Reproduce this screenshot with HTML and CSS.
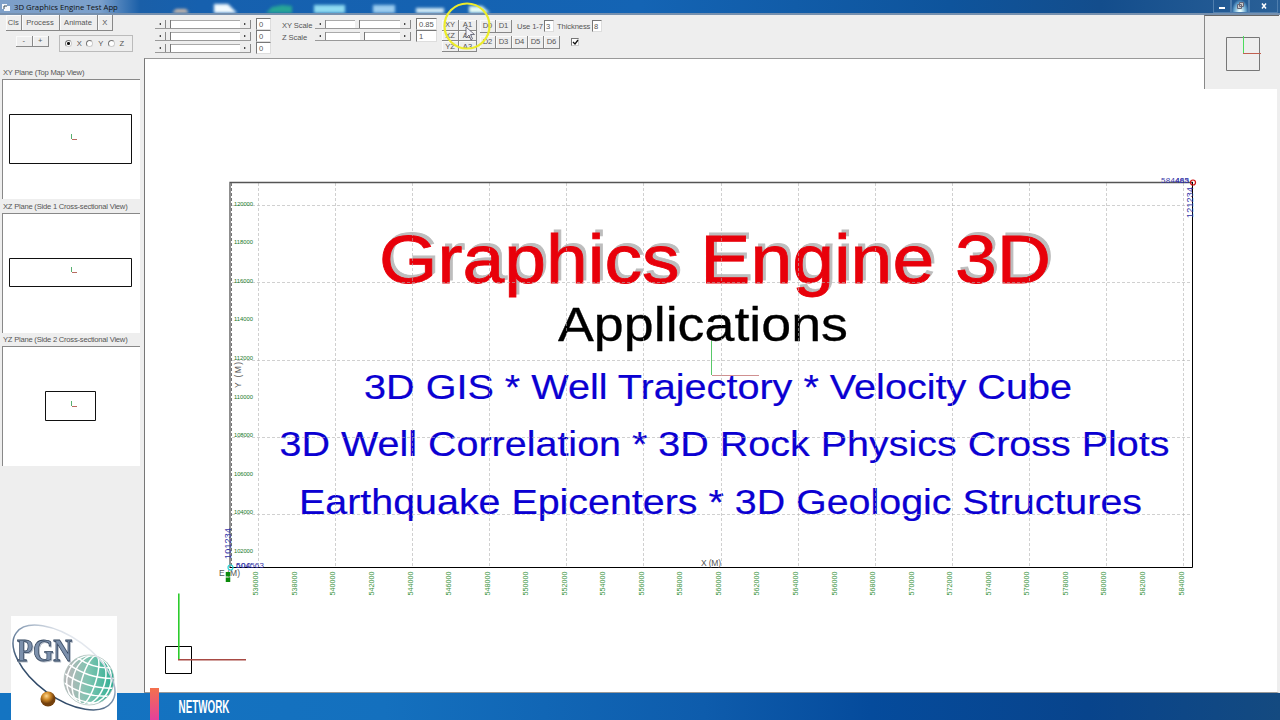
FILE: index.html
```html
<!DOCTYPE html>
<html lang="en">
<head>
    <meta charset="UTF-8">
    <title>3D Graphics Engine Test App</title>
    <link rel="stylesheet" href="styles.css">
</head>
<body>
    <header class="titlebar">
        <svg class="app-icon" width="10" height="10" viewBox="0 0 10 10">
            <path d="M1 2h5v2h3v5H3V7H1z" fill="#f4f8fc"/>
            <path d="M3 7V4h3" fill="none" stroke="#345" stroke-width="1"/>
        </svg>
        <span class="title">3D Graphics Engine Test App</span>
        <svg class="desktop" width="400" height="13" viewBox="120 0 400 13">
            <g class="blobs">
                <path d="M172 13l4-4h10l3 4z" fill="#cbb9ac"/>
                <path d="M214 4h14l9 9h-23z" fill="#f2fbff"/>
                <path d="M266 13l6-6 10-2 10 1v7z" fill="#27a596"/>
                <path d="M314 5h31v8h-31z" fill="#8fdcf2"/>
                <path d="M373 5h22v8h-22z" fill="#9ccdf0"/>
                <path d="M416 8h28v5h-28z" fill="#d4ecf6"/>
                <path d="M469 6h13l8 7h-21z" fill="#e4fbf4"/>
            </g>
        </svg>
        <div class="window-buttons">
            <span class="win"><svg width="8" height="9"><path d="M1 7h6" stroke="#fff" stroke-width="2"/></svg></span>
            <span class="win glow"><svg width="9" height="9"><path d="M3.500 1.500h4v4h-4zM1.500 3.500h4v4h-4z" fill="#ccc" stroke="#667"/></svg></span>
            <span class="win close"><svg width="8" height="9"><path d="M2 2.500l4 5M6 2.500l-4 5" stroke="#fff" stroke-width="1.500"/></svg></span>
        </div>
    </header>

    <div class="workspace">
        <aside class="sidebar">
            <div class="buttons">
                <button class="btn w16">Cls</button><button class="btn w38">Process</button><button class="btn w38">Animate</button><button class="btn w16">X</button>
            </div>
            <div class="axis-row">
                <div class="zoomers"><button class="btn">-</button><button class="btn">+</button></div>
                <div class="axis-group">
                    <span class="radio on"></span>X
                    <span class="radio"></span>Y
                    <span class="radio"></span>Z
                </div>
            </div>
            <section class="plane">
                <h2><span>XY Plane (Top Map View)</span></h2>
                <svg class="view" width="138" height="120" viewBox="3 80 137 119">
                    <path class="box" d="M9.500 114.500h122v49h-122z"/>
                    <path class="g" d="M71.500 134v5"/><path class="r" d="M72 139.500h5"/>
                </svg>
            </section>
            <section class="plane">
                <h2><span>XZ Plane (Side 1 Cross-sectional View)</span></h2>
                <svg class="view" width="138" height="120" viewBox="3 214 137 119">
                    <path class="box" d="M9.500 258.500h122v28h-122z"/>
                    <path class="g" d="M71.500 267v5"/><path class="r" d="M72 272.500h5"/>
                </svg>
            </section>
            <section class="plane">
                <h2><span>YZ Plane (Side 2 Cross-sectional View)</span></h2>
                <svg class="view" width="138" height="120" viewBox="3 347 137 119">
                    <path class="box" d="M45.500 391.500h50v29h-50z"/>
                    <path class="g" d="M71.500 401v5"/><path class="r" d="M72 406.500h5"/>
                </svg>
            </section>
        </aside>

        <main class="main">
            <div class="toolbar">
                <div class="rotate">
                    <div class="line"><div class="scroll"><i class="arrow left"></i><i class="thumb"></i><i class="track"></i><i class="arrow right"></i></div><span class="field">0</span></div>
                    <div class="line"><div class="scroll"><i class="arrow left"></i><i class="thumb"></i><i class="track"></i><i class="arrow right"></i></div><span class="field">0</span></div>
                    <div class="line"><div class="scroll"><i class="arrow left"></i><i class="thumb"></i><i class="track"></i><i class="arrow right"></i></div><span class="field">0</span></div>
                </div>
                <div class="scales">
                    <div class="line"><label>XY Scale</label><div class="scroll"><i class="arrow left"></i><i class="track before-xy"></i><i class="thumb"></i><i class="track"></i><i class="arrow right"></i></div><span class="field wide">0.85</span></div>
                    <div class="line"><label>Z Scale</label><div class="scroll"><i class="arrow left"></i><i class="track before-z"></i><i class="thumb"></i><i class="track"></i><i class="arrow right"></i></div><span class="field wide">1</span></div>
                </div>
                <div class="pairs">
                    <button class="btn">XY</button><button class="btn">A1</button>
                    <button class="btn">XZ</button><button class="btn">A2</button>
                    <button class="btn">YZ</button><button class="btn">A3</button>
                </div>
                <div class="draw">
                    <div class="draw-row">
                        <button class="btn">D0</button><button class="btn">D1</button>
                        <label class="use">Use 1-7</label><span class="field tiny">3</span>
                        <label class="thick">Thickness</label><span class="field tiny">8</span>
                    </div>
                    <div class="draw-row">
                        <button class="btn">D2</button><button class="btn">D3</button><button class="btn">D4</button><button class="btn">D5</button><button class="btn">D6</button>
                        <span class="check"><svg width="7" height="7"><path d="M1 3l2 2 3-4" fill="none" stroke="#111" stroke-width="1.300"/></svg></span>
                    </div>
                </div>
            </div>

            <svg class="canvas" width="1132" height="633" viewBox="145 59 1132 633">
                <path class="axis-green" d="M711.500 341v34"/>
                <path class="axis-red" d="M712 375.500h47"/>

                <g class="heading">
                    <text class="shadow" x="382" y="280" textLength="672" lengthAdjust="spacingAndGlyphs">Graphics Engine 3D</text>
                    <text class="front" x="379" y="282.500" textLength="672" lengthAdjust="spacingAndGlyphs">Graphics Engine 3D</text>
                </g>
                <text class="sub" x="558" y="340.500" textLength="290" lengthAdjust="spacingAndGlyphs">Applications</text>
                <g class="topics">
                    <text x="364" y="399" textLength="708" lengthAdjust="spacingAndGlyphs">3D GIS * Well Trajectory * Velocity Cube</text>
                    <text x="279.500" y="456" textLength="890" lengthAdjust="spacingAndGlyphs">3D Well Correlation * 3D Rock Physics Cross Plots</text>
                    <text x="299" y="514" textLength="843" lengthAdjust="spacingAndGlyphs">Earthquake Epicenters * 3D Geologic Structures</text>
                </g>

                <g id="grid" class="grid"></g>
                <path class="frame-back" d="M230 568V182.500H1193"/>
                <path class="frame-front" d="M230 567.500H1192.500V182"/>
                <path class="inner-dash" d="M231.500 183v384"/>
                <g id="x-labels" class="x-labels"></g>
                <g id="y-labels" class="y-labels"></g>

                <g class="axis-title">
                    <text x="701" y="565.500" textLength="20">X (M)</text>
                    <text transform="translate(240.500 388) rotate(-90)" textLength="26">Y (M)</text>
                    <text x="219" y="576" textLength="21">E (M)</text>
                </g>
                <g class="corner">
                    <text transform="translate(230.500 559) rotate(-90)" class="big" textLength="31">101234</text>
                    <text transform="translate(1192.500 218) rotate(-90)" class="big" textLength="31">121234</text>
                    <text x="236" y="568" textLength="28">604563</text>
                    <text x="236" y="568" textLength="15">500</text>
                    <text x="1161" y="182.500" textLength="28">584463</text>
                    <text x="1175" y="182.500" textLength="14">485</text>
                </g>
                <path d="M228 572v11" stroke="#0a8a0a" stroke-width="4.500" stroke-dasharray="4.500 1"/>
                <circle cx="230.500" cy="567.500" r="2.500" fill="none" stroke="#2cd8d8" stroke-width="1.200"/>
                <circle cx="1193" cy="182.500" r="2.500" fill="none" stroke="#d01010" stroke-width="1.200"/>

                <path d="M165.500 646.500h26v27h-26z" fill="none" stroke="#000"/>
                <path d="M178.800 593.500v66" stroke="#2ccc2c" stroke-width="1.600"/>
                <path d="M178 659.800h68" stroke="#a84a44" stroke-width="1.500"/>
            </svg>
        </main>
    </div>

    <footer class="banner">
        <span class="marker"></span>
        <svg width="64" height="27" viewBox="0 0 64 27">
            <text x="1.500" y="20.300" textLength="51" lengthAdjust="spacingAndGlyphs">NETWORK</text>
        </svg>
    </footer>

    <!-- orientation preview, sits over the corner of the canvas -->
    <svg class="preview" width="75" height="74" viewBox="1205 16 74 73">
        <path d="M1226.500 37.500h33v33h-33z" fill="none" stroke="#777"/>
        <path d="M1243.500 36v17" stroke="#4cdc5c"/>
        <path d="M1243 53.500h18" stroke="#c06050"/>
    </svg>

    <!-- cursor highlight -->
    <svg class="pointer" width="50" height="50" viewBox="0 0 50 50">
        <circle cx="25" cy="25" r="22.500" fill="none" stroke="#ecec2c" stroke-width="2.200"/>
        <path d="M24 26v11l3-3 2 5 1.500-1-2-4.500h4z" fill="#f4f4fa" stroke="#556" stroke-width=".8"/>
    </svg>

    <svg class="logo" width="106" height="104" viewBox="0 0 106 104">
        <defs>
            <linearGradient id="globe" x1="0" x2="1">
                <stop offset="0.100" stop-color="#b4b8b8"/>
                <stop offset="0.500" stop-color="#7cc4b0"/>
                <stop offset="1" stop-color="#2cae92"/>
            </linearGradient>
            <linearGradient id="orbit" x1="0" x2="0" y1="0" y2="1">
                <stop offset="0" stop-color="#e4e8ee"/>
                <stop offset="0.450" stop-color="#7c92ac"/>
                <stop offset="1" stop-color="#2c4664"/>
            </linearGradient>
            <radialGradient id="moon" cx="0.400" cy="0.300">
                <stop offset="0" stop-color="#ffd890"/>
                <stop offset="0.500" stop-color="#d08a28"/>
                <stop offset="1" stop-color="#74400c"/>
            </radialGradient>
        </defs>
        <rect width="106" height="104" fill="#fff"/>
        <circle cx="78" cy="64" r="25" fill="url(#globe)"/>
        <g transform="rotate(17 78 64)" fill="none" stroke="#fff" stroke-width="1.500">
            <ellipse cx="78" cy="64" rx="7" ry="25"/>
            <ellipse cx="78" cy="64" rx="16" ry="25"/>
            <ellipse cx="78" cy="64" rx="22" ry="25"/>
            <path d="M60 46q18 6 36 0M54 55q24 8 48 0M53 65q25 8 50 0M55 74q23 8 46 0M62 83q16 6 32 0"/>
        </g>
        <circle cx="78" cy="64" r="25" fill="none" stroke="#a8bcb8" stroke-width=".7"/>
        <ellipse cx="53" cy="51.500" rx="59" ry="30" transform="rotate(36 53 51.500)" fill="none" stroke="url(#orbit)" stroke-width="1.500"/>
        <circle cx="37" cy="83" r="7.500" fill="url(#moon)"/>
        <text x="6" y="45" textLength="55" lengthAdjust="spacingAndGlyphs">PGN</text>
    </svg>

    <script>
        const NS = 'http://www.w3.org/2000/svg';
        const add = (parent, tag, attrs, text) => {
            const el = document.createElementNS(NS, tag);
            for (const key in attrs) el.setAttribute(key, attrs[key]);
            if (text) el.textContent = text;
            document.getElementById(parent).appendChild(el);
        };

        // grid lines every 4000 m
        for (let i = 0; i < 13; i++) {
            const x = Math.floor(258.4 + i * 77.1) + 0.5;
            add('grid', 'path', { d: `M${x} 183V567` });
        }
        for (let i = 0; i < 5; i++) {
            const y = Math.floor(205.4 + i * 77.3) + 0.5;
            add('grid', 'path', { d: `M232 ${y}H1192` });
        }

        // tick labels every 2000 m
        for (let i = 0; i < 25; i++) {
            add('x-labels', 'text', { transform: `translate(${258.3 + i * 38.55} 595.5) rotate(-90)`, textLength: 24 }, String(536000 + i * 2000));
        }
        for (let i = 0; i < 10; i++) {
            add('y-labels', 'text', { x: 234, y: 205.5 + i * 38.6, textLength: 19 }, String(120000 - i * 2000));
        }
    </script>
</body>
</html>
```
FILE: styles.css
```css
* {
    box-sizing: border-box;
}
body {
    margin: 0;
    width: 1280px;
    height: 720px;
    overflow: hidden;
    display: flex;
    flex-direction: column;
    position: relative;
    background: #eee;
    color: #555;
    font: 7.6px/10px "Liberation Sans", Arial, sans-serif;
}
svg {
    display: block;
}

/* title bar */
.titlebar {
    height: 15px;
    flex: none;
    display: flex;
    align-items: flex-start;
    background: linear-gradient(90deg, #7d9fc8 0, #7ba0cc 100px, #1a5fa8 140px, #1660ae 200px, #1464b4 640px, #0e549c 950px, #134d8c 1100px, #2a6097 1280px);
    border-bottom: 2px solid #7690ae;
}
.app-icon {
    margin: 2px 0 0 1px;
}
.title {
    width: 109px;
    padding-left: 3px;
    margin-top: 2px;
    color: #111;
    font: 7.75px/10px "Open Sans", "Noto Sans", sans-serif;
    white-space: nowrap;
}
.blobs {
    filter: blur(1.5px);
}
.window-buttons {
    margin-left: auto;
    margin-right: 2px;
    display: flex;
    height: 13px;
}
.win {
    width: 18px;
    border: 1px solid #4f7eae;
    border-top: 0;
    display: flex;
    justify-content: center;
    padding-top: 1px;
}
.glow {
    background: radial-gradient(ellipse at 50% 100%, #e8ffff 10%, #5f9cc8 55%, transparent 75%);
}
.close {
    width: 29px;
}

/* common controls */
.btn {
    margin: 0;
    padding: 0;
    border: 0;
    border-right: 1px solid #888;
    border-bottom: 1px solid #888;
    box-shadow: inset 1px 1px #fafafa;
    background: #eee;
    color: #555;
    font: inherit;
    text-align: center;
    white-space: nowrap;
}
.field {
    width: 15px;
    height: 12px;
    padding-left: 2px;
    border: 1px solid #ddd;
    border-top-color: #777;
    border-left-color: #777;
    background: #fff;
    line-height: 11px;
}
.scroll {
    width: 96px;
    height: 9px;
    display: flex;
    border-bottom: 1px solid #999;
    background: #eee;
}
.arrow {
    width: 11px;
    border-right: 1px solid #888;
    display: flex;
    align-items: center;
    justify-content: center;
}
.arrow::before {
    content: "";
    border: 1.5px solid transparent;
}
.left::before {
    border-right: 2px solid #111;
    border-left: 0;
}
.right::before {
    border-left: 2px solid #111;
    border-right: 0;
}
.thumb {
    width: 5px;
    border-right: 1px solid #777;
    background: #eee;
}
.track {
    flex: 1;
    background: #fff;
    border-top: 1px solid #aaa;
}

/* layout */
.workspace {
    height: 678px;
    flex: none;
    display: flex;
}
.sidebar {
    width: 144px;
    flex: none;
}
.buttons {
    display: flex;
    height: 16px;
    padding-left: 6px;
}
.w16 {
    width: 15.5px;
}
.w38 {
    width: 38px;
}
.axis-row {
    display: flex;
    align-items: flex-start;
    gap: 10px;
    padding: 4px 0 0 16px;
    height: 36px;
}
.zoomers {
    display: flex;
    padding-top: 1px;
}
.zoomers .btn {
    width: 16.5px;
    height: 11px;
    line-height: 8px;
}
.axis-group {
    width: 74px;
    height: 17px;
    border: 1px solid #bbb;
    display: flex;
    align-items: center;
    padding-left: 5px;
    gap: 4.7px;
}
.radio {
    width: 7px;
    height: 7px;
    border: 1px solid #ccc;
    border-top-color: #777;
    border-left-color: #777;
    border-radius: 50%;
    background: #fff;
}
.on {
    background: radial-gradient(#111 35%, #fff 50%);
}
.plane {
    height: 133.5px;
    padding-left: 2px;
}
.plane h2 {
    margin: 0;
    height: 12px;
    padding: 1px 0 0 1px;
    font: inherit;
    letter-spacing: -0.22px;
    white-space: nowrap;
}
.view {
    border-top: 1px solid #888;
    border-left: 1px solid #888;
    background: #fff;
}
.box {
    fill: none;
    stroke: #111;
}
.g {
    stroke: #58b070;
}
.r {
    stroke: #b86c60;
}

.main {
    flex: 1;
    display: flex;
    flex-direction: column;
}
.toolbar {
    height: 43px;
    flex: none;
    display: flex;
    padding: 3px 0 0 11px;
}
.line {
    display: flex;
    align-items: center;
    height: 12px;
}
.rotate {
    width: 127px;
}
.rotate .scroll {
    margin-right: 5px;
}
.scales label {
    width: 33px;
    padding-top: 4px;
    letter-spacing: -0.1px;
    white-space: nowrap;
}
.scales .scroll {
    margin-right: 5px;
}
.before-xy {
    flex: none;
    width: 29px;
}
.before-z {
    flex: none;
    width: 34px;
}
.wide {
    width: 21px;
}
.pairs {
    display: grid;
    grid-template-columns: 17px 18px;
    grid-auto-rows: 10.7px;
    margin: 2px 0 0 5px;
}
.pairs .btn {
    line-height: 9px;
}
.draw {
    margin: 2px 0 0 3px;
}
.draw-row {
    display: flex;
    height: 16px;
}
.draw-row .btn {
    width: 16px;
    height: 13px;
}
.draw label {
    padding-top: 2px;
    white-space: nowrap;
}
.use {
    width: 32px;
    padding-left: 5px;
    letter-spacing: -0.1px;
}
.thick {
    width: 38px;
    padding-left: 3px;
    letter-spacing: -0.1px;
}
.tiny {
    width: 10px;
    padding-left: 1px;
}
.check {
    width: 8px;
    height: 8px;
    margin: 2px 0 0 11px;
    border: 1px solid #ccc;
    border-top-color: #777;
    border-left-color: #777;
    background: #fff;
}

/* plot */
.canvas {
    flex: none;
    box-sizing: content-box;
    border: 1px solid #999;
    border-left-color: #777;
    border-right: 2px solid #eee;
    background: #fff;
    font-family: "Liberation Sans", Arial, sans-serif;
}
.grid path {
    stroke: rgba(176, 176, 176, .6);
    stroke-dasharray: 3 2;
}
.frame-back {
    fill: none;
    stroke: #555;
    stroke-width: 1.3;
}
.frame-front {
    fill: none;
    stroke: #000;
}
.inner-dash {
    stroke: #777;
    stroke-dasharray: 3 2;
}
.axis-green {
    stroke: #58c868;
}
.axis-red {
    stroke: #d09090;
}
.heading text {
    font-size: 68.7px;
    stroke-width: .8;
}
.shadow {
    fill: #bdbdbd;
    stroke: #bdbdbd;
}
.front {
    fill: #e8000a;
    stroke: #e8000a;
}
.sub {
    font-size: 47.5px;
    fill: #000;
    stroke: #000;
    stroke-width: .3;
}
.topics text {
    font-size: 35px;
    fill: #0b00d2;
    stroke: #0b00d2;
    stroke-width: .2;
}
.x-labels text {
    font-size: 7.2px;
    fill: #3a9440;
}
.y-labels text {
    font-size: 5.8px;
    fill: #187828;
}
.axis-title text {
    font-size: 8.5px;
    fill: #555;
}
.corner text {
    font-size: 8px;
    fill: #3434a8;
}
.corner .big {
    font-size: 9px;
}

/* bottom banner */
.banner {
    height: 27px;
    flex: none;
    display: flex;
    background: linear-gradient(90deg, #1474c2, #1470be 30%, #0e5cac 55%, #054b9c 68%, #08448c 85%, #144a80);
    padding-left: 150px;
}
.marker {
    width: 9px;
    height: 32px;
    margin-top: -5px;
    margin-right: 18px;
    position: relative;
    background: linear-gradient(#f4704c, #e4409c);
}
.banner text {
    font: bold 18.5px "Liberation Sans", Arial, sans-serif;
    fill: #fff;
}

/* overlays */
.preview {
    position: absolute;
    left: 1204px;
    top: 15px;
    background: #eee;
    border-top: 1px solid #666;
    border-left: 1px solid #888;
}
.pointer {
    position: absolute;
    left: 442px;
    top: 1px;
}
.logo {
    position: absolute;
    left: 11px;
    top: 616px;
}
.logo text {
    font: bold 32px "Liberation Serif", serif;
    fill: #7c90ac;
    stroke: #34465e;
    stroke-width: .8;
    filter: drop-shadow(1.5px 1.5px 0 #b4bcc8);
}
```
